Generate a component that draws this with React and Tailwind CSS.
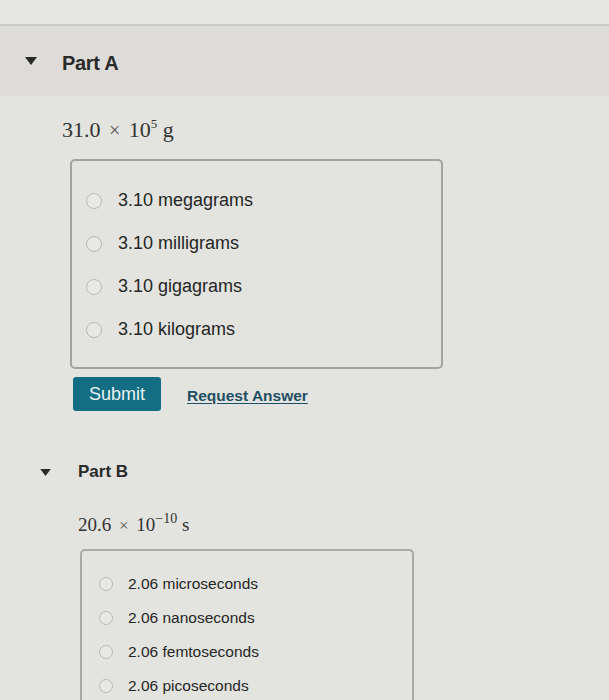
import React from 'react'

const partA = ['3.10 megagrams', '3.10 milligrams', '3.10 gigagrams', '3.10 kilograms']
const partB = ['2.06 microseconds', '2.06 nanoseconds', '2.06 femtoseconds', '2.06 picoseconds']

const Caret = ({ className = '' }) => (
  <svg viewBox="0 0 12 8" className={className}>
    <path d="M0 0 L12 0 L6 8 Z" fill="#2a2a2a" />
  </svg>
)

const Radio = ({ size = 16 }) => (
  <span
    className="inline-block rounded-full border border-[#b8b8b4] bg-[#e8e8e4] shrink-0"
    style={{ width: size, height: size }}
  />
)

export default function App() {
  return (
    <div className="w-[609px] h-[700px] overflow-hidden bg-[#e3e3df] text-[#222] font-['Liberation_Sans',Arial,sans-serif]">
      <div className="h-[26px] bg-[#e6e6e2] border-b-2 border-[#cacac6]" />

      {/* Part A */}
      <div className="h-[70px] bg-[#dddcd8] flex items-center pl-[25px]">
        <Caret className="w-[12px] h-[8px]" />
        <span className="ml-[25px] mt-[3px] text-[20px] font-bold tracking-[-0.3px] text-[#2a2a2a]">Part A</span>
      </div>

      <div className="pl-[62px] pt-[21px]">
        <div className="font-['Liberation_Serif',serif] text-[22px] text-[#333] leading-[26px]">
          31.0 <span className="text-[20px] text-[#555] mx-[3px]">×</span> 10<sup className="text-[13px] relative -top-[9px] align-baseline">5</sup>{' '}g
        </div>

        <div className="ml-[8px] mt-[16px] w-[373px] h-[210px] border-2 border-[#a2a2a0] rounded-[5px] pt-[28px] pl-[14px] flex flex-col gap-[20px]">
          {partA.map((t) => (
            <label key={t} className="flex items-center gap-[16px] h-[23px]">
              <Radio size={16} />
              <span className="text-[18px] text-[#262626]">{t}</span>
            </label>
          ))}
        </div>

        <div className="flex items-center mt-[8px] ml-[11px]">
          <button className="w-[88px] h-[34px] rounded-[3px] bg-[#146e83] text-[18px] text-[#e8f2f4]">Submit</button>
          <a className="ml-[26px] mt-[3px] text-[15.5px] font-bold text-[#1f4f62] underline underline-offset-2">Request Answer</a>
        </div>
      </div>

      {/* Part B */}
      <div className="flex items-center pl-[40px] mt-[49px] h-[24px]">
        <Caret className="w-[11px] h-[7px]" />
        <span className="ml-[27px] text-[17px] font-bold text-[#2a2a2a]">Part B</span>
      </div>

      <div className="pl-[78px] pt-[30px]">
        <div className="font-['Liberation_Serif',serif] text-[19px] text-[#333] leading-[22px]">
          20.6 <span className="text-[17px] text-[#555] mx-[3px]">×</span> 10<sup className="text-[14px] relative -top-[8px] align-baseline">−10</sup>{' '}s
        </div>

        <div className="ml-[2px] mt-[12px] w-[334px] h-[200px] border-2 border-b-0 border-[#a9a9a6] rounded-t-[5px] pt-[23px] pl-[17px] flex flex-col gap-[14px]">
          {partB.map((t) => (
            <label key={t} className="flex items-center gap-[15px] h-[20px]">
              <Radio size={14} />
              <span className="text-[15.5px] text-[#262626]">{t}</span>
            </label>
          ))}
        </div>
      </div>
    </div>
  )
}
